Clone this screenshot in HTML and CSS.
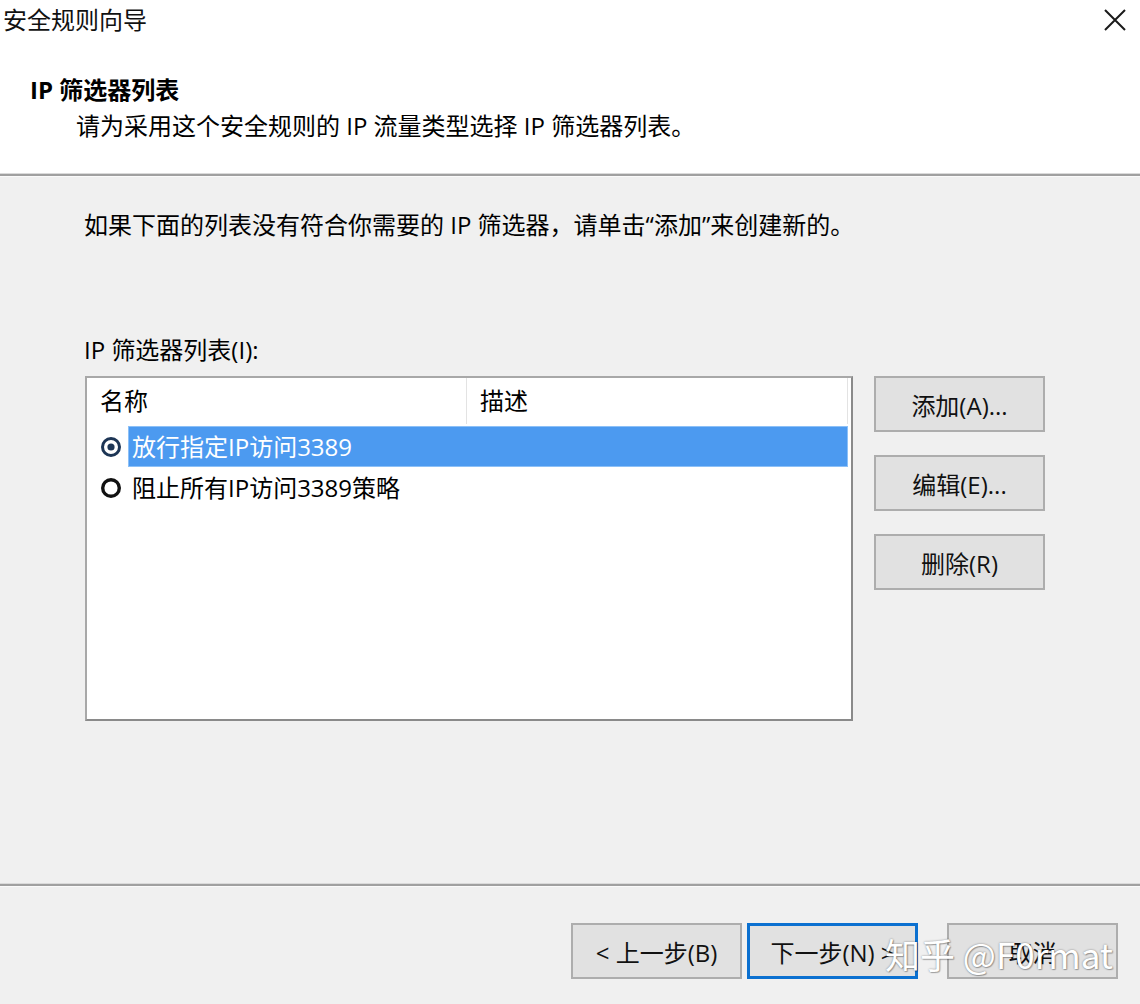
FILE: index.html
```html
<!DOCTYPE html>
<html lang="zh-CN">
<head>
<meta charset="utf-8">
<title>安全规则向导</title>
<link rel="stylesheet" href="styles.css">
</head>
<body>
<div class="dialog">
  <header class="top">
    <div class="titlebar">
      <span class="title">安全规则向导</span>
      <svg class="close" width="22" height="22" viewBox="0 0 22 22"><path d="M1 1 L21 21 M21 1 L1 21" stroke="#1a1a1a" stroke-width="2" fill="none"/></svg>
    </div>
    <div class="heading">IP 筛选器列表</div>
    <div class="subtitle">请为采用这个安全规则的 IP 流量类型选择 IP 筛选器列表。</div>
  </header>
  <div class="sep"></div>
  <main class="content">
    <p class="intro">如果下面的列表没有符合你需要的 IP 筛选器，请单击“添加”来创建新的。</p>
    <div class="label">IP 筛选器列表(I):</div>
    <div class="listarea">
      <div class="listbox">
        <div class="listhead">
          <div class="col col-name">名称</div>
          <div class="col col-desc">描述</div>
        </div>
        <div class="row">
          <svg class="radio" width="22" height="22" viewBox="0 0 22 22"><circle cx="11" cy="11" r="8.5" stroke="#1d3555" stroke-width="3" fill="none"/><circle cx="11" cy="11" r="3.6" fill="#1d3555"/></svg>
          <div class="item selected">放行指定IP访问3389</div>
        </div>
        <div class="row">
          <svg class="radio" width="22" height="22" viewBox="0 0 22 22"><circle cx="11" cy="11" r="8.3" stroke="#111" stroke-width="3.4" fill="none"/></svg>
          <div class="item">阻止所有IP访问3389策略</div>
        </div>
      </div>
      <div class="sidebtns">
        <div class="btn">添加(A)...</div>
        <div class="btn">编辑(E)...</div>
        <div class="btn">删除(R)</div>
      </div>
    </div>
  </main>
  <div class="sep"></div>
  <footer class="bottom">
    <div class="btn">&lt; 上一步(B)</div>
    <div class="btn primary">下一步(N) &gt;</div>
    <div class="btn cancel">取消</div>
  </footer>
  <div class="watermark">知乎 @F0rmat</div>
</div>
</body>
</html>
```
FILE: styles.css
```css
html, body {
  margin: 0;
  padding: 0;
  height: 1004px;
  overflow: hidden;
}
body {
  background: #f0f0f0;
  font-family: "Open Sans", "Noto Sans CJK SC", sans-serif;
  font-size: 24px;
  color: #000;
}
.dialog {
  position: relative;
  width: 1140px;
  height: 1004px;
  display: flex;
  flex-direction: column;
}
.top {
  height: 173px;
  background: #fff;
  flex: 0 0 173px;
}
.titlebar {
  height: 40px;
  display: flex;
  align-items: center;
  justify-content: space-between;
  padding: 0 14px 0 3px;
}
.title {
  line-height: 40px;
  color: #111;
}
.heading {
  margin-top: 32px;
  padding-left: 30px;
  line-height: 36px;
  font-weight: bold;
}
.subtitle {
  padding-left: 76px;
  line-height: 36px;
}
.sep {
  flex: 0 0 2px;
  height: 2px;
  background: #a0a0a0;
  border-top: 1px solid #dadada;
  border-bottom: 1px solid #fafafa;
}
.content {
  flex: 1 1 auto;
  padding-left: 85px;
  padding-top: 31px;
  background: #f0f0f0;
}
.intro {
  margin: 0;
  margin-left: -1px;
  line-height: 34px;
}
.label {
  margin-top: 91px;
  margin-left: -1px;
  line-height: 34px;
}
.listarea {
  margin-top: 9px;
  display: flex;
  align-items: flex-start;
}
.listbox {
  width: 764px;
  height: 341px;
  background: #fff;
  border: 2px solid #8a8a8a;
  border-color: #a8a8a8 #8a8a8a #8a8a8a #a8a8a8;
}
.listhead {
  display: flex;
  height: 48px;
}
.col {
  line-height: 46px;
  height: 46px;
}
.col-name {
  width: 366px;
  padding-left: 13px;
  border-right: 1px solid #e3e3e3;
}
.col-desc {
  width: 367px;
  padding-left: 13px;
  border-right: 1px solid #e3e3e3;
}
.row {
  display: flex;
  align-items: center;
  height: 41px;
}
.radio {
  margin-left: 13px;
  flex: 0 0 22px;
}
.item {
  margin-left: 6px;
  width: 716px;
  padding-left: 4px;
  line-height: 41px;
  height: 41px;
}
.item.selected {
  background: #4c9af0;
  color: #fff;
  box-shadow: inset 0 0 0 1px #8cc0f7;
}
.sidebtns {
  margin-left: 21px;
  display: flex;
  flex-direction: column;
  gap: 23px;
}
.btn {
  width: 167px;
  height: 52px;
  background: #e1e1e1;
  border: 2px solid #adadad;
  display: flex;
  align-items: center;
  justify-content: center;
  color: #111;
}
.bottom {
  flex: 0 0 117px;
  display: flex;
  justify-content: flex-end;
  align-items: flex-start;
  padding-top: 36px;
  padding-right: 22px;
  box-sizing: border-box;
  gap: 5px;
}
.btn.primary {
  width: 165px;
  height: 50px;
  border: 3px solid #0b70d0;
}
.btn.cancel {
  margin-left: 24px;
}
.watermark {
  position: absolute;
  left: 885px;
  top: 930px;
  font-family: "Noto Sans CJK SC", sans-serif;
  font-size: 35px;
  line-height: 48px;
  color: #fff;
  text-shadow: 0 0 2px rgba(0,0,0,0.45), 1px 1px 1px rgba(0,0,0,0.25);
}
```
